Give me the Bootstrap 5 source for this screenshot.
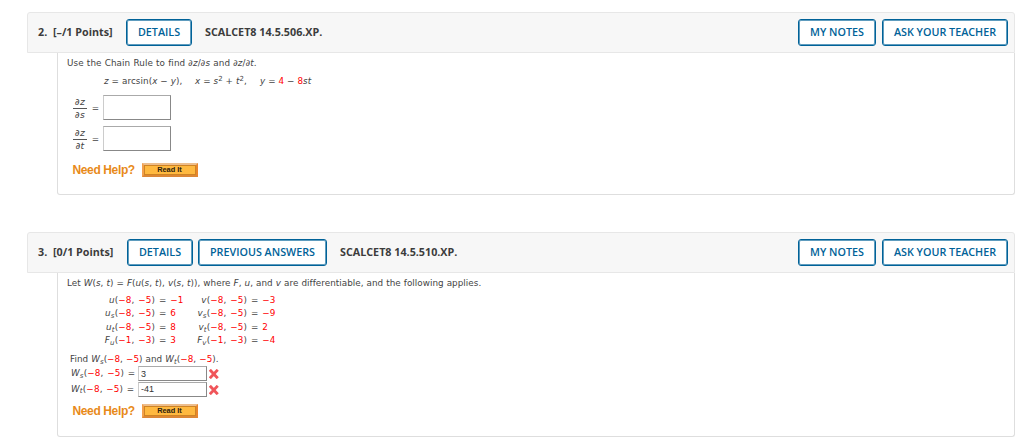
<!DOCTYPE html>
<html lang="en">
<head>
  <meta charset="UTF-8">
  <title>Homework | Questions 2-3</title>
  <link href="https://cdn.jsdelivr.net/npm/bootstrap@5.3.0/dist/css/bootstrap.min.css" rel="stylesheet">
  <style>
    body { padding: 12px 9px 0 27px; font-family: "DejaVu Sans", sans-serif; font-size: 8.8px; line-height: 14px; color: #444; overflow: hidden; }
    .question { margin-bottom: 37px; }
    .question:last-of-type { margin-bottom: 0; }
    .q-head { height: 41px; padding: 0 6px 0 10px; background: #f7f7f7; border: 1px solid #e7e7e7; border-radius: 3px 3px 0 0; font-family: "Open Sans", sans-serif; font-size: 10.75px; line-height: 13px; font-weight: 700; color: #3c3c3c; }
    .q-number { width: 15px; }
    .q-points { width: 73px; }
    .q-points-three { width: 74px; }
    .btn-q, .btn-q:hover { height: 27px; padding: 0; border: 1px solid #006298; border-radius: 3px; background: #fff; box-shadow: inset 0 0 0 1px #5f9cbe; color: #006298; font-size: 10.75px; line-height: 23px; font-weight: 600; white-space: nowrap; }
    .w-details { width: 66px; }
    .w-previous { width: 129px; margin-left: 5px; }
    .w-notes { width: 78px; }
    .w-ask { width: 126px; margin-left: 6px; }
    .q-code { margin-left: 13px; }
    .q-body { margin-left: 30px; padding-left: 9px; border: 1px solid #dedede; border-top: 0; border-radius: 0 0 3px 3px; }
    .body-two { height: 142px; }
    .body-three { height: 164px; }
    .prompt { height: 21px; line-height: 21px; letter-spacing: .035px; word-spacing: .2px; }
    .prompt-chain { letter-spacing: .1px; }
    .red { color: #f00; }
    .formula { padding-left: 37px; height: 14px; line-height: 15px; margin-bottom: 4px; letter-spacing: .08px; }
    .f-z { width: 91px; }
    .f-x { width: 65px; }
    .frac-row { height: 31px; padding-left: 6px; }
    .frac-row .answer { margin-left: -1px; }
    .frac { width: 14px; font-size: 9.2px; font-style: italic; text-align: center; line-height: 12px; letter-spacing: .15px; padding-top: 1px; }
    .frac div:first-child { border-bottom: 1px solid #555; }
    .eq { width: 17px; padding-top: 1px; text-align: center; }
    .answer { border: 1px solid #888; border-left-color: #ccc; border-top-color: #aaa; border-radius: 0; padding: 0; background: #fff; outline: 0; }
    .answer-lg { width: 68px; height: 25px; }
    .answer-sm { width: 69px; height: 15px; padding-left: 2px; font: 9px "Liberation Sans", sans-serif; color: #333; }
    sub, sup { font-size: 7px; line-height: 0; }
    .math { letter-spacing: .15px; word-spacing: .7px; }
    .values { height: 54px; }
    .value-row { height: 13.4px; line-height: 13.4px; }
    .lhs { width: 88px; text-align: right; }
    .rhs { width: 28px; padding-left: 4px; white-space: nowrap; }
    .lhs-v { width: 64px; }
    .find { padding-left: 3px; height: 18px; line-height: 22px; letter-spacing: .02px; word-spacing: .3px; }
    .answer-row { height: 15.5px; padding-left: 4px; }
    .answer-label { width: 67px; white-space: nowrap; }
    .cross { margin: 3px 0 0 2px; }
    .help { padding-left: 5.5px; height: 16px; margin-top: 8px; }
    .help-three { margin-top: 6px; }
    .help-label { width: 69px; font: 700 12px "Liberation Sans", sans-serif; letter-spacing: -.37px; color: #e88a1a; }
    .btn-read, .btn-read:hover { width: 56px; height: 14px; padding: 0; border: 2px solid #f3a04c; border-top-color: #edbd8c; border-right-color: #e9862c; border-bottom-color: #dc8736; border-radius: 0; background: #ffb940; box-shadow: inset 0 0 0 1px #cf8424; font: 700 7.4px/10px "Liberation Sans", sans-serif; color: #2d210d; }
  </style>
</head>
<body>

  <!-- Question 2 -->
  <section class="question">
    <div class="q-head d-flex align-items-center">
      <span class="q-number">2.</span><span class="q-points">[–/1 Points]</span>
      <button class="btn btn-q w-details">DETAILS</button>
      <span class="q-code">SCALCET8 14.5.506.XP.</span>
      <button class="btn btn-q w-notes ms-auto">MY NOTES</button>
      <button class="btn btn-q w-ask">ASK YOUR TEACHER</button>
    </div>
    <div class="q-body body-two">
      <div class="prompt prompt-chain">Use the Chain Rule to find <i>∂z</i>/<i>∂s</i> and <i>∂z</i>/<i>∂t</i>.</div>
      <div class="formula d-flex">
        <span class="f-z"><i>z</i> = arcsin(<i>x</i> − <i>y</i>),</span>
        <span class="f-x"><i>x</i> = <i>s</i><sup>2</sup> + <i>t</i><sup>2</sup>,</span>
        <span><i>y</i> = <span class="red">4</span> − <span class="red">8</span><i>st</i></span>
      </div>
      <div class="frac-row d-flex align-items-center">
        <div class="frac"><div>∂z</div><div>∂s</div></div><span class="eq">=</span><input class="answer answer-lg">
      </div>
      <div class="frac-row d-flex align-items-center">
        <div class="frac"><div>∂z</div><div>∂t</div></div><span class="eq">=</span><input class="answer answer-lg">
      </div>
      <div class="help d-flex align-items-center"><span class="help-label">Need Help?</span><button class="btn btn-read">Read It</button></div>
    </div>
  </section>

  <!-- Question 3 -->
  <section class="question">
    <div class="q-head d-flex align-items-center">
      <span class="q-number">3.</span><span class="q-points q-points-three">[0/1 Points]</span>
      <button class="btn btn-q w-details">DETAILS</button>
      <button class="btn btn-q w-previous">PREVIOUS ANSWERS</button>
      <span class="q-code">SCALCET8 14.5.510.XP.</span>
      <button class="btn btn-q w-notes ms-auto">MY NOTES</button>
      <button class="btn btn-q w-ask">ASK YOUR TEACHER</button>
    </div>
    <div class="q-body body-three">
      <div class="prompt">Let <i>W</i>(<i>s</i>, <i>t</i>) = <i>F</i>(<i>u</i>(<i>s</i>, <i>t</i>), <i>v</i>(<i>s</i>, <i>t</i>)), where <i>F</i>, <i>u</i>, and <i>v</i> are differentiable, and the following applies.</div>
      <div class="values math">
        <div class="value-row d-flex">
          <span class="lhs"><i>u</i>(<span class="red">−8</span>, <span class="red">−5</span>)</span><span class="rhs">= <span class="red">−1</span></span>
          <span class="lhs lhs-v"><i>v</i>(<span class="red">−8</span>, <span class="red">−5</span>)</span><span class="rhs">= <span class="red">−3</span></span>
        </div>
        <div class="value-row d-flex">
          <span class="lhs"><i>u<sub>s</sub></i>(<span class="red">−8</span>, <span class="red">−5</span>)</span><span class="rhs">= <span class="red">6</span></span>
          <span class="lhs lhs-v"><i>v<sub>s</sub></i>(<span class="red">−8</span>, <span class="red">−5</span>)</span><span class="rhs">= <span class="red">−9</span></span>
        </div>
        <div class="value-row d-flex">
          <span class="lhs"><i>u<sub>t</sub></i>(<span class="red">−8</span>, <span class="red">−5</span>)</span><span class="rhs">= <span class="red">8</span></span>
          <span class="lhs lhs-v"><i>v<sub>t</sub></i>(<span class="red">−8</span>, <span class="red">−5</span>)</span><span class="rhs">= <span class="red">2</span></span>
        </div>
        <div class="value-row d-flex">
          <span class="lhs"><i>F<sub>u</sub></i>(<span class="red">−1</span>, <span class="red">−3</span>)</span><span class="rhs">= <span class="red">3</span></span>
          <span class="lhs lhs-v"><i>F<sub>v</sub></i>(<span class="red">−1</span>, <span class="red">−3</span>)</span><span class="rhs">= <span class="red">−4</span></span>
        </div>
      </div>
      <div class="find">Find <i>W<sub>s</sub></i>(<span class="red">−8</span>, <span class="red">−5</span>) and <i>W<sub>t</sub></i>(<span class="red">−8</span>, <span class="red">−5</span>).</div>
      <div class="answer-row d-flex">
        <span class="answer-label math"><i>W<sub>s</sub></i>(<span class="red">−8</span>, <span class="red">−5</span>) =</span><input class="answer answer-sm" value="3">
        <svg class="cross" width="10" height="10" viewBox="0 0 10 10"><path d="M1.8 1.8L7.8 8.2M7.8 1.8L1.8 8.2" stroke="#f0555a" stroke-width="2.8" stroke-linecap="square"/></svg>
      </div>
      <div class="answer-row d-flex">
        <span class="answer-label math"><i>W<sub>t</sub></i>(<span class="red">−8</span>, <span class="red">−5</span>) =</span><input class="answer answer-sm" value="-41">
        <svg class="cross" width="10" height="10" viewBox="0 0 10 10"><path d="M1.8 1.8L7.8 8.2M7.8 1.8L1.8 8.2" stroke="#f0555a" stroke-width="2.8" stroke-linecap="square"/></svg>
      </div>
      <div class="help help-three d-flex align-items-center"><span class="help-label">Need Help?</span><button class="btn btn-read">Read It</button></div>
    </div>
  </section>

  <script src="https://cdn.jsdelivr.net/npm/bootstrap@5.3.0/dist/js/bootstrap.bundle.min.js"></script>
</body>
</html>
